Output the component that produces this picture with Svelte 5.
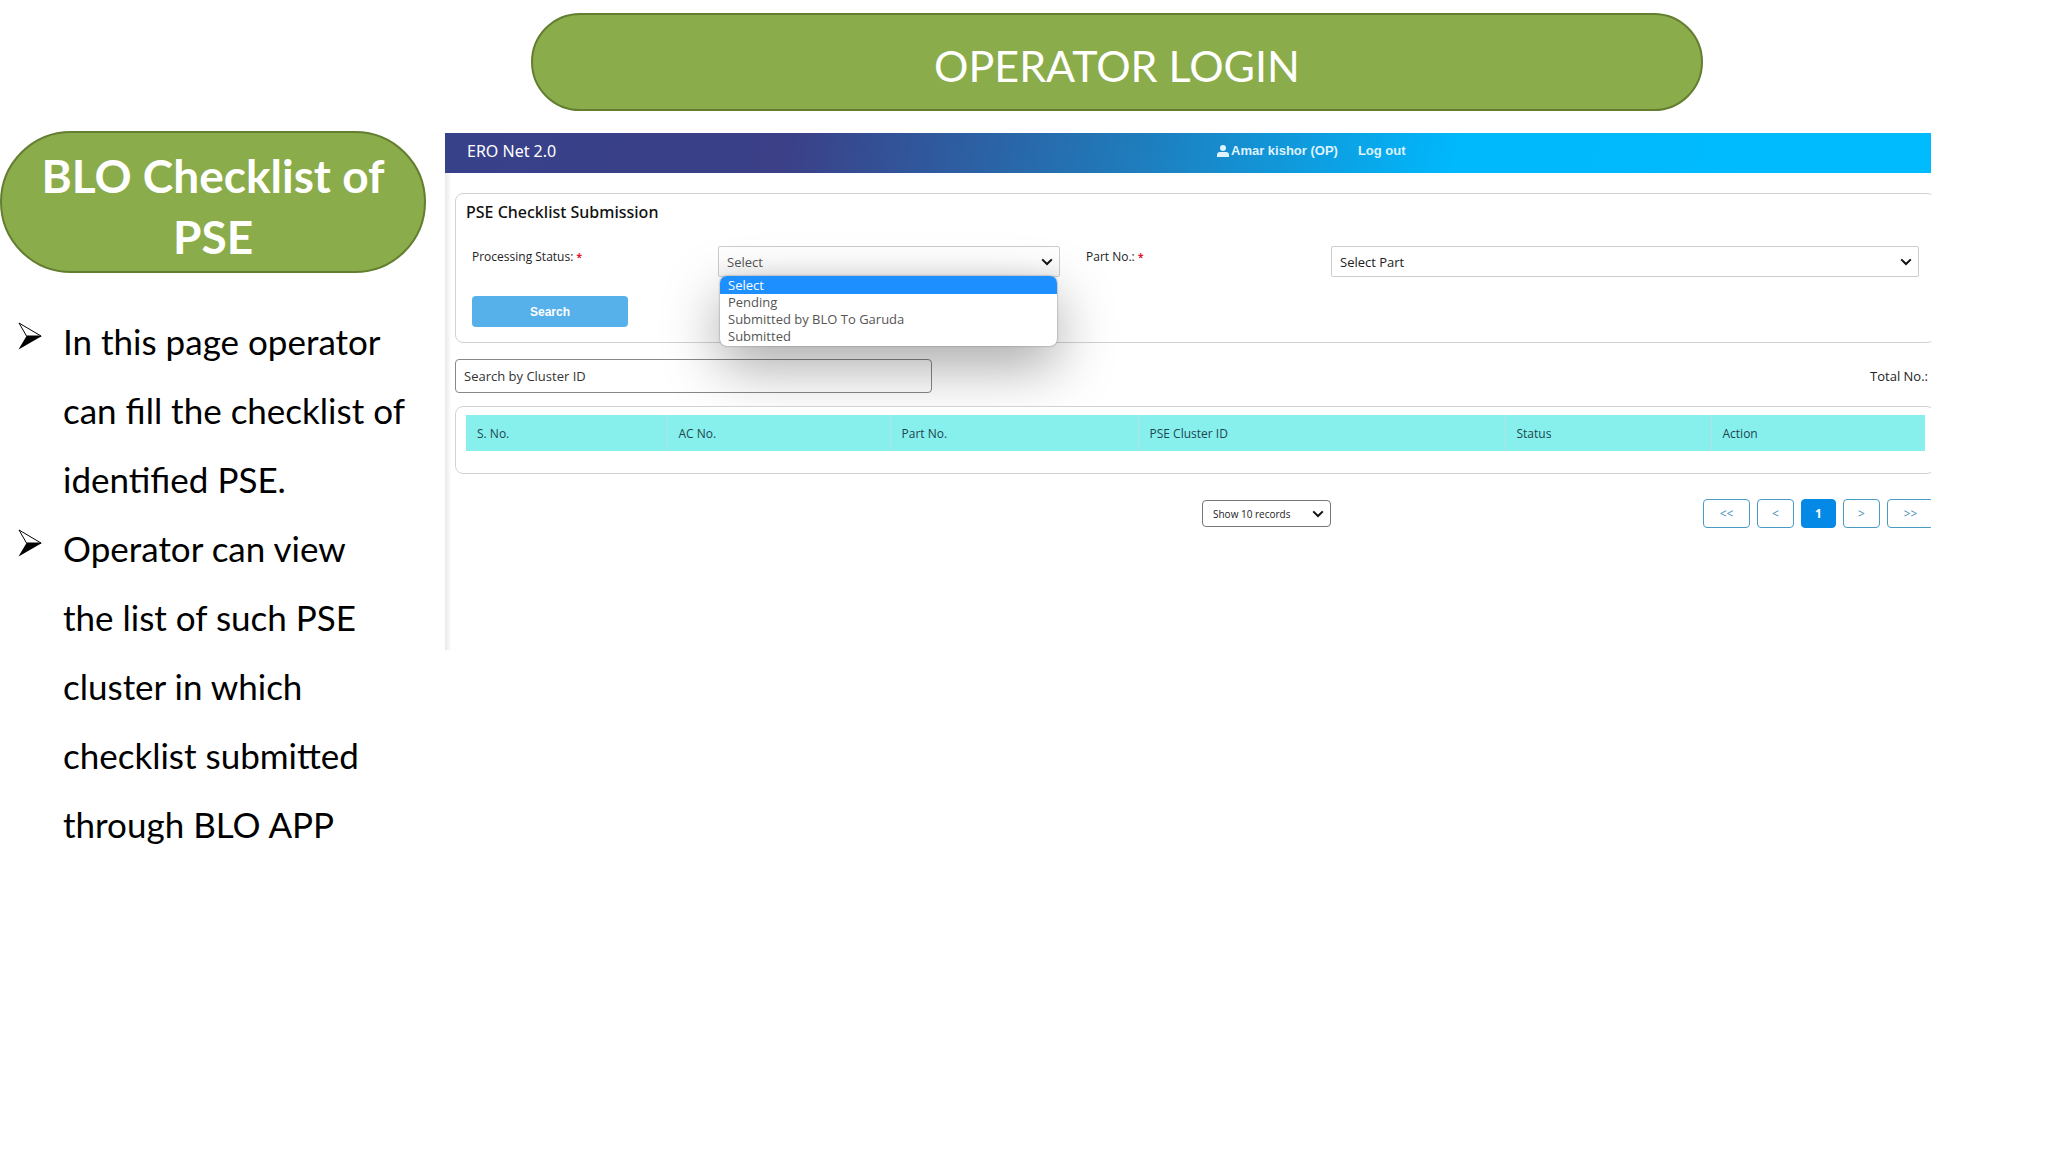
<script>
  const statusOptions = ['Select', 'Pending', 'Submitted by BLO To Garuda', 'Submitted'];
  const notes = [
    'In this page operator can fill the checklist of identified PSE.',
    'Operator can view\nthe list of such PSE cluster in which checklist submitted through BLO APP'
  ];
  const columns = [
    { name: 'S. No.', share: 201 },
    { name: 'AC No.', share: 223 },
    { name: 'Part No.', share: 248 },
    { name: 'PSE Cluster ID', share: 367 },
    { name: 'Status', share: 206 },
    { name: 'Action', share: 214 }
  ];
  const total = columns.reduce((sum, c) => sum + c.share, 0);
  let status = $state('Select');
</script>

{#snippet chevron()}
  <svg class="chevron" viewBox="0 0 12 8" aria-hidden="true"><path d="M1.2 1.4 6 6 10.8 1.4" /></svg>
{/snippet}

<div class="page">
  <aside>
    <h2 class="pill side">BLO Checklist of PSE</h2>
    <ul class="notes">
      {#each notes as note}
        <li>
          <svg class="arrow" viewBox="0 0 24 28" aria-hidden="true">
            <path d="M1 1 23 14H8.500z" fill="#fff" stroke="#000" stroke-width="1" />
            <path d="M8.500 14H24L.5 27.500z" />
          </svg>
          <span>{note}</span>
        </li>
      {/each}
    </ul>
  </aside>

  <main>
    <h1 class="pill title">OPERATOR LOGIN</h1>

    <section class="app">
      <header>
        <span class="brand">ERO Net 2.0</span>
        <nav>
          <a href="#profile">
            <svg class="user" viewBox="0 0 12 12" aria-hidden="true">
              <circle cx="6" cy="3" r="3" />
              <path d="M0 12V10Q0 7 3 7H9Q12 7 12 10V12z" />
            </svg>Amar kishor (OP)</a>
          <a href="#logout">Log out</a>
        </nav>
      </header>

      <div class="content">
        <form class="card filter">
          <h3>PSE Checklist Submission</h3>
          <div class="fields">
            <label for="status">Processing Status: <b>*</b></label>
            <div class="select">
              <select id="status" class="muted" bind:value={status}>
                {#each statusOptions as option}<option>{option}</option>{/each}
              </select>
              {@render chevron()}
              <ul class="menu" role="listbox" aria-label="Processing Status">
                {#each statusOptions as option}
                  <li role="option" aria-selected={option === status}>{option}</li>
                {/each}
              </ul>
            </div>
            <label for="part" class="second">Part No.: <b>*</b></label>
            <div class="select">
              <select id="part"><option>Select Part</option></select>
              {@render chevron()}
            </div>
          </div>
          <button type="button" class="search">Search</button>
        </form>

        <div class="lookup">
          <input type="text" placeholder="Search by Cluster ID" aria-label="Search by Cluster ID" />
          <span>Total No.:</span>
        </div>

        <div class="card list">
          <table>
            <thead>
              <tr>
                {#each columns as column}
                  <th scope="col" style="width: {(column.share / total) * 100}%">{column.name}</th>
                {/each}
              </tr>
            </thead>
          </table>
        </div>

        <div class="pager">
          <div class="select size">
            <select aria-label="Records per page"><option>Show 10 records</option></select>
            {@render chevron()}
          </div>
          <button type="button" class="wide">&lt;&lt;</button>
          <button type="button">&lt;</button>
          <button type="button" class="current">1</button>
          <button type="button">&gt;</button>
          <button type="button" class="wide">&gt;&gt;</button>
        </div>
      </div>
    </section>
  </main>
</div>

<style>
  :global(body) {
    background: #fff;
  }
  .page,
  .page :global(*) {
    box-sizing: border-box;
  }
  .page {
    display: grid;
    grid-template-columns: 445px minmax(0, 1fr);
    padding-right: 117px;
    font-family: 'Open Sans', 'Noto Sans', sans-serif;
    color: #222;
  }
  h1, h2, h3, ul {
    margin: 0;
    padding: 0;
    list-style: none;
  }
  aside {
    padding-top: 131px;
    font-family: Lato, sans-serif;
  }
  .pill {
    display: flex;
    align-items: center;
    justify-content: center;
    border: 2px solid #637d31;
    border-radius: 72px;
    background: #8bac4a;
    color: #fff;
    font-family: Lato, sans-serif;
    text-align: center;
  }
  .side {
    margin-right: 19px;
    padding: 12px 32px 4px;
    font-size: 46px;
    line-height: 61px;
  }
  .notes {
    padding: 34px 16px 0 18px;
    color: #000;
    font-size: 35px;
    line-height: 69px;
    white-space: pre-line;
  }
  .notes li {
    display: grid;
    grid-template-columns: 24px 1fr;
    gap: 21px;
  }
  .arrow {
    width: 24px;
    height: 28px;
    margin-top: 15px;
  }
  main {
    padding-top: 13px;
  }
  .title {
    margin: 0 228px 22px 86px;
    padding: 20px 0 12px;
    font-size: 43px;
    font-weight: 400;
    line-height: 62px;
  }
  .app {
    min-height: 517px;
    overflow: hidden;
    box-shadow: inset 6px 0 5px -3px #e8e8e8;
  }
  header {
    display: grid;
    grid-template-columns: 772fr 714fr;
    align-items: center;
    height: 40px;
    padding-bottom: 5px;
    background: linear-gradient(100deg, #37418a 0%, #3b4087 23%, #2178b8 45%, #00b8fc 68%, #00bcff 100%);
    color: #fff;
  }
  .brand {
    padding-left: 22px;
    font-family: 'Noto Sans', sans-serif;
    font-size: 16px;
  }
  nav {
    display: flex;
    gap: 20px;
    font-family: 'Liberation Sans', sans-serif;
    font-size: 13px;
    font-weight: 700;
  }
  nav a {
    display: flex;
    align-items: center;
    gap: 2px;
    color: #dff3ff;
    text-decoration: none;
  }
  .user {
    width: 12px;
    height: 12px;
    fill: currentColor;
  }
  .content {
    margin: 20px -4px 0 10px;
  }
  .card {
    border: 1px solid #d2d2d4;
    border-radius: 8px;
    background: #fff;
  }
  .filter {
    padding: 6px 15px 15px 16px;
  }
  h3 {
    margin-left: -6px;
    color: #111;
    font-family: 'Noto Sans', sans-serif;
    font-size: 16px;
    font-weight: 500;
    line-height: 24px;
  }
  .fields {
    display: grid;
    grid-template-columns: 246fr 342fr 271fr 588fr;
    margin: 22px 0 19px;
  }
  label {
    font-size: 12px;
    font-weight: 500;
    line-height: 22px;
  }
  label b {
    color: #e0142c;
    font-size: 10px;
  }
  .second {
    padding-left: 26px;
  }
  .select {
    position: relative;
  }
  select {
    display: block;
    width: 100%;
    height: 31px;
    padding: 0 8px;
    appearance: none;
    border: 1px solid #ccc;
    border-radius: 2px;
    background: #fff;
    color: #222;
    font: 13px 'Open Sans', 'Noto Sans', sans-serif;
  }
  select.muted {
    background: linear-gradient(#fff 40%, #f4f4f4);
    color: #555;
  }
  .chevron {
    position: absolute;
    top: 12px;
    right: 7px;
    width: 12px;
    height: 8px;
    fill: none;
    stroke: #111;
    stroke-width: 2;
    pointer-events: none;
  }
  .menu {
    position: absolute;
    z-index: 2;
    top: 30px;
    left: 2px;
    right: 3px;
    overflow: hidden;
    padding-bottom: 1px;
    border-radius: 7px;
    background: #fff;
    box-shadow: 0 0 2px #777, 0 20px 56px rgba(0, 0, 0, 0.35);
    color: #555;
    font-size: 13px;
    line-height: 17px;
  }
  .menu li {
    padding: 0 8px;
  }
  .menu li[aria-selected='true'] {
    padding-top: 1px;
    background: #1e8fff;
    color: #fff;
  }
  .search {
    display: block;
    width: 156px;
    height: 31px;
    border: 0;
    border-radius: 4px;
    background: #56b0ea;
    color: #fff;
    font: 700 12px 'Liberation Sans', sans-serif;
  }
  .lookup {
    display: flex;
    align-items: center;
    justify-content: space-between;
    margin: 16px 0 13px;
    padding-right: 7px;
    font-size: 13px;
  }
  .lookup input {
    width: 477px;
    height: 34px;
    padding: 0 8px;
    border: 1px solid #888;
    border-radius: 4px;
    background: #fff;
    font: 13px 'Open Sans', 'Noto Sans', sans-serif;
  }
  .lookup input::placeholder {
    color: #333;
    opacity: 1;
  }
  .list {
    position: relative;
    z-index: 3;
    padding: 8px 9px 22px 10px;
  }
  table {
    width: 100%;
    table-layout: fixed;
    border-collapse: collapse;
  }
  th {
    height: 36px;
    padding: 0 11px;
    border-right: 1px solid #b5e3e4;
    background: #87f0ed;
    color: #1d4650;
    font-size: 12px;
    font-weight: 500;
    text-align: left;
  }
  th:last-child {
    border-right: 0;
  }
  .pager {
    display: flex;
    align-items: center;
    justify-content: flex-end;
    gap: 7px;
    margin-top: 25px;
    padding-right: 1px;
  }
  .size {
    width: 129px;
    margin-right: 365px;
  }
  .size select {
    height: 27px;
    padding: 0 10px;
    border-color: #777;
    border-radius: 4px;
    font-size: 10px;
  }
  .size .chevron {
    top: 10px;
  }
  .pager button {
    width: 37px;
    height: 29px;
    padding: 0;
    border: 1px solid #4a9bc4;
    border-radius: 4px;
    background: #fff;
    color: #4a8fb5;
    font: 12px 'Open Sans', 'Noto Sans', sans-serif;
  }
  .pager .wide {
    width: 47px;
  }
  .pager .current {
    width: 35px;
    border-color: #048ae6;
    background: #048ae6;
    color: #fff;
    font-weight: 700;
  }
</style>
